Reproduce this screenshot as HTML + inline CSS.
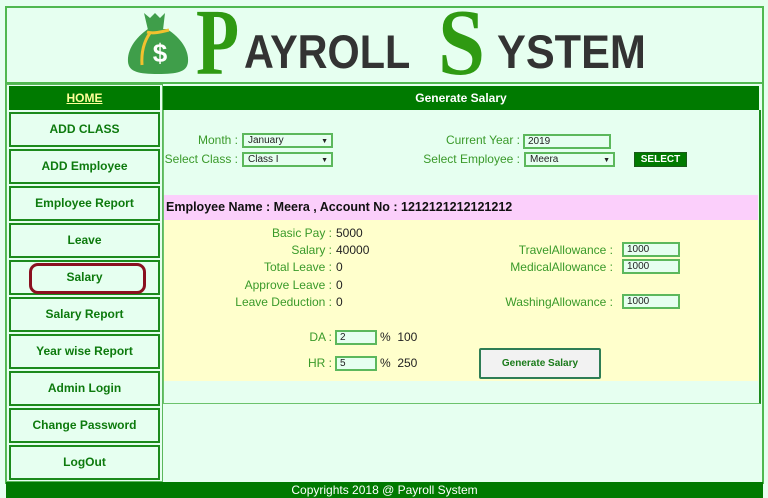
<!DOCTYPE html>
<html><head><meta charset="utf-8"><style>
*{margin:0;padding:0;box-sizing:border-box}
body{width:768px;height:498px;background:#e6fff0;position:relative;overflow:hidden;font-family:"Liberation Sans",sans-serif}
.a{position:absolute;white-space:nowrap}
.outer{left:5px;top:6px;width:759px;height:478px;border:2px solid #50b850;background:#e6fff0}
.nav{left:163px;top:86px;width:596px;height:24px;background:#007a00;color:#fff;font:bold 12px "Liberation Sans",sans-serif;text-align:center;line-height:24px}
.home{left:9px;top:86px;width:151px;height:24px;background:#007a00;color:#ffff99;font:bold 12px "Liberation Sans",sans-serif;text-align:center;line-height:24px;text-decoration:underline}
.btn{left:9px;width:151px;height:35px;border:2px solid #1c8a1c;background:#e6fff0;color:#0d7a0d;font:bold 12px "Liberation Sans",sans-serif;text-align:center;line-height:31px}
.lbl{color:#3a9a2a;font-size:12px;font-family:"Liberation Sans",sans-serif}
.val{color:#222;font-size:12px;font-family:"Liberation Sans",sans-serif}
.inp{height:15px;border:2px solid #5cb85c;background:#e6fff0;font:10px "Liberation Sans",sans-serif;color:#222;padding-left:3px;line-height:11px}
.sel{height:15px;border:2px solid #5cb85c;background:#e6fff0;font:10px "Liberation Sans",sans-serif;color:#222;padding-left:4px;line-height:11px}
.sel:after{content:"▼";position:absolute;right:3px;top:1px;font-size:7px}
.big{font:bold 94px 'Liberation Serif',serif;color:#2f9a12;line-height:94px;transform:scaleX(0.75);transform-origin:left}
.cap{font:bold 47px 'Liberation Sans',sans-serif;color:#333;line-height:47px;transform-origin:left}
</style></head><body>
<div class="a outer"></div>
<div class="a" style="left:7px;top:82px;width:755px;height:2px;background:#50b850"></div>
<svg class="a" style="left:125px;top:10px" width="66" height="66" viewBox="0 0 66 66">
<path d="M19 3 L25 8 L30 3 L35 8 L40 3 L38 20 L23 20 Z" fill="#3f9e4a"/>
<path d="M23 19 C10 28 2 40 3 52 C4 62 14 64 33 64 C52 64 62 62 63 52 C64 40 56 28 42 19 Z" fill="#3f9e4a"/>
<path d="M22 22 C28 24 36 22 44 20" stroke="#f2c12e" stroke-width="3" fill="none"/>
<path d="M25 23 C20 30 16 40 17 55" stroke="#f2c12e" stroke-width="3" fill="none"/>
<text x="35" y="52" font-family="Liberation Sans" font-weight="bold" font-size="26" fill="#fff" text-anchor="middle">$</text>
</svg>
<div class="a big" style="left:196px;top:-4px">P</div>
<div class="a cap" style="left:244px;top:28px;transform:scaleX(0.88)">AYROLL</div>
<div class="a big" style="left:438px;top:-4px;transform:scaleX(0.9)">S</div>
<div class="a cap" style="left:497px;top:28px;transform:scaleX(0.92)">YSTEM</div>
<div class="a" style="left:6px;top:84px;width:157px;height:398px;border:1px solid #5cb85c"></div>
<div class="a home">HOME</div>
<div class="a btn" style="top:112px">ADD CLASS</div>
<div class="a btn" style="top:149px">ADD Employee</div>
<div class="a btn" style="top:186px">Employee Report</div>
<div class="a btn" style="top:223px">Leave</div>
<div class="a btn" style="top:260px">Salary</div>
<div class="a" style="left:29px;top:263px;width:117px;height:31px;border:3px solid #8a1020;border-radius:9px"></div>
<div class="a btn" style="top:297px">Salary Report</div>
<div class="a btn" style="top:334px">Year wise Report</div>
<div class="a btn" style="top:371px">Admin Login</div>
<div class="a btn" style="top:408px">Change Password</div>
<div class="a btn" style="top:445px">LogOut</div>
<div class="a nav">Generate Salary</div>
<div class="a" style="left:163px;top:110px;width:598px;height:294px;border:1px solid #6cc36c;border-top:none;border-right:2px solid #1c8a1c"></div>
<div class="a lbl" style="left:160px;top:133px;width:78px;text-align:right">Month :</div>
<div class="a sel" style="left:242px;top:133px;width:91px">January</div>
<div class="a lbl" style="left:160px;top:152px;width:78px;text-align:right">Select Class :</div>
<div class="a sel" style="left:242px;top:152px;width:91px">Class I</div>
<div class="a lbl" style="left:400px;top:133px;width:120px;text-align:right">Current Year :</div>
<div class="a inp" style="left:523px;top:134px;width:88px">2019</div>
<div class="a lbl" style="left:400px;top:152px;width:120px;text-align:right">Select Employee :</div>
<div class="a sel" style="left:524px;top:152px;width:91px">Meera</div>
<div class="a" style="left:634px;top:152px;width:53px;height:15px;background:#007a00;border:1px solid #1a5a1a;color:#fff;font:bold 10px 'Liberation Sans',sans-serif;text-align:center;line-height:13px">SELECT</div>
<div class="a" style="left:164px;top:195px;width:594px;height:25px;background:#fbcffb;font:bold 12.5px 'Liberation Sans',sans-serif;color:#111;line-height:25px;padding-left:2px">Employee Name : Meera , Account No : 1212121212121212</div>
<div class="a" style="left:164px;top:220px;width:594px;height:161px;background:#ffffcc"></div>
<div class="a lbl" style="left:200px;top:226px;width:132px;text-align:right">Basic Pay :</div><div class="a val" style="left:336px;top:226px">5000</div>
<div class="a lbl" style="left:200px;top:243px;width:132px;text-align:right">Salary :</div><div class="a val" style="left:336px;top:243px">40000</div>
<div class="a lbl" style="left:200px;top:260px;width:132px;text-align:right">Total Leave :</div><div class="a val" style="left:336px;top:260px">0</div>
<div class="a lbl" style="left:200px;top:278px;width:132px;text-align:right">Approve Leave :</div><div class="a val" style="left:336px;top:278px">0</div>
<div class="a lbl" style="left:200px;top:295px;width:132px;text-align:right">Leave Deduction :</div><div class="a val" style="left:336px;top:295px">0</div>
<div class="a lbl" style="left:470px;top:243px;width:143px;text-align:right">TravelAllowance :</div>
<div class="a inp" style="left:622px;top:242px;width:58px">1000</div>
<div class="a lbl" style="left:470px;top:260px;width:143px;text-align:right">MedicalAllowance :</div>
<div class="a inp" style="left:622px;top:259px;width:58px">1000</div>
<div class="a lbl" style="left:470px;top:295px;width:143px;text-align:right">WashingAllowance :</div>
<div class="a inp" style="left:622px;top:294px;width:58px">1000</div>
<div class="a lbl" style="left:290px;top:330px;width:42px;text-align:right">DA :</div>
<div class="a inp" style="left:335px;top:330px;width:42px">2</div>
<div class="a val" style="left:380px;top:330px">%&nbsp;&nbsp;100</div>
<div class="a lbl" style="left:290px;top:356px;width:42px;text-align:right">HR :</div>
<div class="a inp" style="left:335px;top:356px;width:42px">5</div>
<div class="a val" style="left:380px;top:356px">%&nbsp;&nbsp;250</div>
<div class="a" style="left:479px;top:348px;width:122px;height:31px;background:#f2f2f2;border:2px solid #2e7d55;border-radius:2px;color:#1a7a1a;font:bold 10px 'Liberation Sans',sans-serif;text-align:center;line-height:27px">Generate Salary</div>
<div class="a" style="left:6px;top:482px;width:757px;height:16px;background:#007a00;color:#fff;font:12px 'Liberation Sans',sans-serif;text-align:center;line-height:16px">Copyrights 2018 @ Payroll System</div>
</body></html>
